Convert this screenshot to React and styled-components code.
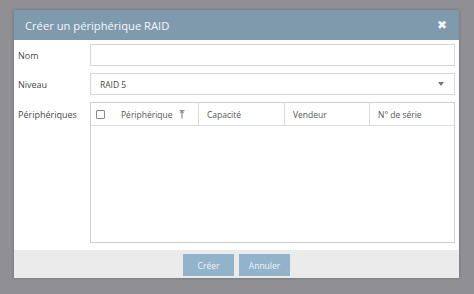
import React from "react"
import styled, { createGlobalStyle } from "styled-components"

const Global = createGlobalStyle`
  html, body {
    margin: 0;
    padding: 0;
    background: #8f8f94;
    font-family: "Open Sans", "Liberation Sans", sans-serif;
  }
  * { box-sizing: border-box; }
`

const Page = styled.div`
  width: 474px;
  height: 294px;
  padding: 10px 15px 16px 14px;
`

const Dialog = styled.div`
  display: flex;
  flex-direction: column;
  height: 268px;
  background: #fff;
  box-shadow: 0 0 3px rgba(0, 0, 0, 0.25);
`

const Header = styled.div`
  height: 30px;
  background: #7f9aad;
  display: flex;
  align-items: center;
  justify-content: space-between;
  padding: 0 12px 0 11px;
  color: #f4f7f9;
  font-size: 11.2px;
`

const Close = styled.span`
  font-family: "DejaVu Sans", sans-serif;
  font-weight: bold;
  font-size: 12px;
  line-height: 1;
`

const Body = styled.div`
  flex: 1;
  display: flex;
  flex-direction: column;
  gap: 7px;
  padding: 4px 4px 7px 4px;
`

const Row = styled.div`
  display: flex;
  align-items: ${(p) => (p.$top ? "flex-start" : "center")};
  flex: ${(p) => (p.$grow ? 1 : "none")};
`

const Label = styled.div`
  width: 72px;
  font-size: 9px;
  color: #4a4a4a;
  padding-top: ${(p) => (p.$top ? "6px" : "0")};
`

const Input = styled.div`
  flex: 1;
  height: 22px;
  border: 1px solid #d6d6d6;
  display: flex;
  align-items: center;
  justify-content: space-between;
  padding: 0 10px 0 9px;
  font-size: 8.5px;
  color: #4a4a4a;
`

const Caret = styled.span`
  width: 0;
  height: 0;
  border-left: 3.5px solid transparent;
  border-right: 3.5px solid transparent;
  border-top: 4px solid #777;
`

const Table = styled.div`
  flex: 1;
  align-self: stretch;
  border: 1px solid #cfcfcf;
  display: flex;
  flex-direction: column;
`

const HeadRow = styled.div`
  display: grid;
  grid-template-columns: 107px 86px 85px 1fr;
  height: 23px;
  border-bottom: 1px solid #dcdcdc;
`

const HeadCell = styled.div`
  display: flex;
  align-items: center;
  padding-left: ${(p) => p.$pad || 8}px;
  border-left: ${(p) => (p.$first ? "none" : "1px solid #dcdcdc")};
  font-size: 8.5px;
  color: #555;
`

const Check = styled.span`
  width: 9px;
  height: 9px;
  border: 1px solid #888;
  border-radius: 1px;
  margin-right: 16px;
`

const Footer = styled.div`
  height: 28px;
  background: #ebebeb;
  display: flex;
  justify-content: center;
  align-items: flex-start;
  gap: 5px;
  padding-top: 4px;
`

const Button = styled.div`
  width: 51px;
  height: 22px;
  background: #93b3cb;
  color: #eef3f7;
  font-size: 8.5px;
  display: flex;
  align-items: center;
  justify-content: center;
`

const SortIcon = () => (
  <svg width="6" height="9" viewBox="0 0 6 9" style={{ marginLeft: 6 }}>
    <path d="M0.5 0.7H5.5M3 1V8.5M1.3 3.2L3 1.3L4.7 3.2" stroke="#666" strokeWidth="0.9" fill="none" />
  </svg>
)

export default function App() {
  return (
    <>
      <Global />
      <Page>
        <Dialog>
          <Header>
            <span>Créer un périphérique RAID</span>
            <Close>✖</Close>
          </Header>
          <Body>
            <Row>
              <Label>Nom</Label>
              <Input />
            </Row>
            <Row>
              <Label>Niveau</Label>
              <Input>
                RAID 5
                <Caret />
              </Input>
            </Row>
            <Row $top $grow>
              <Label $top>Périphériques</Label>
              <Table>
                <HeadRow>
                  <HeadCell $first $pad={5}>
                    <Check />
                    Périphérique
                    <SortIcon />
                  </HeadCell>
                  <HeadCell>Capacité</HeadCell>
                  <HeadCell>Vendeur</HeadCell>
                  <HeadCell>N° de série</HeadCell>
                </HeadRow>
              </Table>
            </Row>
          </Body>
          <Footer>
            <Button>Créer</Button>
            <Button>Annuler</Button>
          </Footer>
        </Dialog>
      </Page>
    </>
  )
}
